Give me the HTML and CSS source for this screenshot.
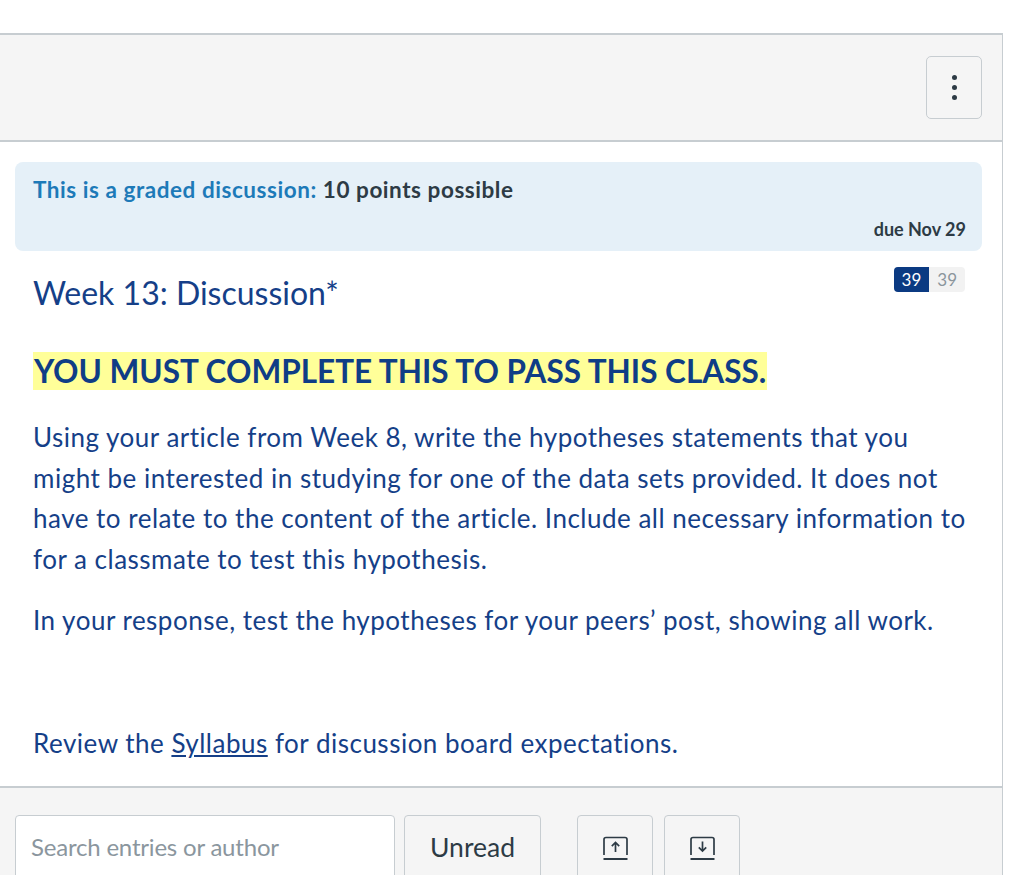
FILE: index.html
```html
<!DOCTYPE html>
<html>
<head>
<meta charset="utf-8">
<link rel="stylesheet" href="styles.css">
</head>
<body>
<div class="page">
  <div class="topbar">
    <button class="kebab" aria-label="More options"><span></span><span></span><span></span></button>
  </div>
  <div class="content">
    <div class="graded">
      <div class="graded-line"><span class="graded-label">This is a graded discussion:</span> <span class="graded-points">10 points possible</span></div>
      <div class="due">due Nov 29</div>
    </div>
    <div class="title-row">
      <h1 class="title">Week 13: Discussion*</h1>
      <div class="counts"><span class="unread-count">39</span><span class="total-count">39</span></div>
    </div>
    <div class="body">
      <p class="must"><span class="hl">YOU MUST COMPLETE THIS TO PASS THIS CLASS.</span></p>
      <p>Using your article from Week 8, write the hypotheses statements that you might be interested in studying for one of the data sets provided. It does not have to relate to the content of the article. Include all necessary information to for a classmate to test this hypothesis.</p>
      <p>In your response, test the hypotheses for your peers’ post, showing all work.</p>
      <p class="blank">&nbsp;</p>
      <p>Review the <a href="#">Syllabus</a> for discussion board expectations.</p>
    </div>
  </div>
  <div class="toolbar">
    <div class="search">Search entries or author</div>
    <button class="btn unread">Unread</button>
    <div class="icon-btns">
      <button class="btn icon" aria-label="Collapse">
        <svg width="27" height="24" viewBox="0 0 27 24" fill="none" stroke="#2d3b45" stroke-width="1.7">
          <path d="M2 19V3.5Q2 1.5 4 1.5H23Q25 1.5 25 3.5V19"/>
          <path d="M1.5 23H25.5" stroke-width="2"/>
          <path d="M13.5 16V6.5M9.8 10.2L13.5 6.5L17.2 10.2"/>
        </svg>
      </button>
      <button class="btn icon" aria-label="Expand">
        <svg width="27" height="24" viewBox="0 0 27 24" fill="none" stroke="#2d3b45" stroke-width="1.7">
          <path d="M2 19V3.5Q2 1.5 4 1.5H23Q25 1.5 25 3.5V19"/>
          <path d="M1.5 23H25.5" stroke-width="2"/>
          <path d="M13.5 5.5V15M9.8 11.3L13.5 15L17.2 11.3"/>
        </svg>
      </button>
    </div>
  </div>
</div>
</body>
</html>
```
FILE: styles.css
```css
html, body {
  margin: 0;
  padding: 0;
  background: #ffffff;
}
body {
  font-family: Lato, "Noto Sans", "Liberation Sans", sans-serif;
  overflow: hidden;
  height: 875px;
}
.page {
  margin-top: 33px;
  width: 1003px;
  border-top: 2px solid #c7cdd1;
  border-right: 1px solid #c7cdd1;
  box-sizing: border-box;
}
.topbar {
  height: 107px;
  background: #f5f5f5;
  border-bottom: 2px solid #c7cdd1;
  display: flex;
  justify-content: flex-end;
  align-items: flex-start;
  padding: 21px 20px 0 0;
  box-sizing: border-box;
}
.kebab {
  width: 56px;
  height: 63px;
  border: 1px solid #c7cdd1;
  border-radius: 5px;
  background: #f5f5f5;
  display: flex;
  flex-direction: column;
  align-items: center;
  justify-content: center;
  gap: 5px;
  padding: 0;
}
.kebab span {
  width: 5px;
  height: 5px;
  border-radius: 50%;
  background: #2d3b45;
}
.content {
  padding: 20px 20px 0 15px;
  height: 646px;
  box-sizing: border-box;
  border-bottom: 2px solid #c7cdd1;
}
.graded {
  background: #e5f0f8;
  border-radius: 8px;
  height: 89px;
  padding: 14px 16px 0 18px;
  box-sizing: border-box;
}
.graded-line {
  font-size: 22.5px;
  letter-spacing: 0.55px;
  font-weight: 700;
  line-height: 28px;
}
.graded-label { color: #1d7ab8; }
.graded-points { color: #2d3b45; }
.due {
  text-align: right;
  font-size: 18px;
  font-weight: 700;
  color: #2d3b45;
  margin-top: 13px;
  line-height: 24px;
}
.title-row {
  display: flex;
  justify-content: space-between;
  align-items: flex-start;
  padding: 16px 17px 0 18px;
}
.title {
  margin: 7px 0 2px 0;
  font-size: 32px;
  font-weight: 400;
  color: #153f88;
  line-height: 38px;
}
.counts {
  display: flex;
  font-size: 17px;
  line-height: 25px;
}
.unread-count {
  background: #0b3a82;
  color: #ffffff;
  padding: 0 8px;
  border-radius: 4px 0 0 4px;
  height: 25px;
}
.total-count {
  background: #f2f2f2;
  color: #8b959c;
  padding: 0 8px;
  border-radius: 0 4px 4px 0;
}
.body {
  padding: 0 10px 0 18px;
  color: #153f88;
  font-size: 26px;
  letter-spacing: 0.5px;
  line-height: 40.5px;
}
.body p {
  margin: 0 0 21px 0;
}
.body .must {
  margin-top: 37px;
  margin-bottom: 26px;
  font-size: 31.5px;
  letter-spacing: 0;
  font-weight: 700;
  line-height: 40px;
}
.hl {
  background: #ffff99;
  padding: 0 1px;
  color: #0f3d86;
}
.body a {
  color: #153f88;
  text-decoration: underline;
}
.toolbar {
  background: #f5f5f5;
  height: 200px;
  padding: 27px 0 0 15px;
  box-sizing: border-box;
  display: flex;
  align-items: flex-start;
  gap: 9px;
}
.search {
  width: 380px;
  height: 80px;
  background: #ffffff;
  border: 1px solid #c7cdd1;
  border-radius: 4px;
  box-sizing: border-box;
  padding: 16px 0 0 15px;
  font-size: 24px;
  letter-spacing: -0.2px;
  color: #8b969e;
  line-height: 30px;
}
.btn {
  font-family: inherit;
  background: #f5f5f5;
  border: 1px solid #c7cdd1;
  border-radius: 4px;
  box-sizing: border-box;
  height: 80px;
  color: #2d3b45;
  padding: 0;
  display: flex;
  justify-content: center;
  align-items: flex-start;
}
.unread {
  width: 137px;
  font-size: 26.5px;
  line-height: 30px;
  padding-top: 16px;
}
.icon-btns {
  display: flex;
  gap: 11px;
  margin-left: 27px;
}
.icon {
  width: 76px;
  padding-top: 20px;
}
.icon svg { display: block; }
```
